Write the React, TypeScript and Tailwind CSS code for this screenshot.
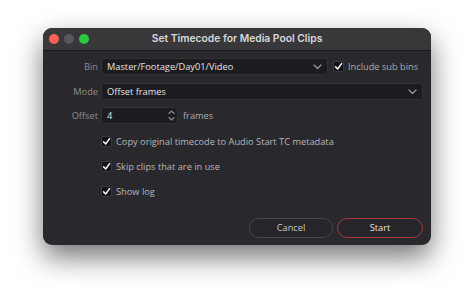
import React from "react";

const Check = () => (
  <div className="w-[11px] h-[11px] rounded-[2px] bg-[#141317] border border-[#3a393e] flex items-center justify-center shrink-0">
    <svg width="9" height="9" viewBox="0 0 10 10">
      <path d="M1.8 5.4 L4.1 7.8 L8.4 1.8" fill="none" stroke="#f2f2f2" strokeWidth="1.7" strokeLinecap="round" strokeLinejoin="round" />
    </svg>
  </div>
);

const Chevron = () => (
  <svg width="9" height="6" viewBox="0 0 9 6">
    <path d="M1 1 L4.5 4.5 L8 1" fill="none" stroke="#9a999e" strokeWidth="1.2" strokeLinecap="round" strokeLinejoin="round" />
  </svg>
);

export default function App() {
  const font = { fontFamily: '"Open Sans", "Liberation Sans", sans-serif' };
  return (
    <div className="w-[474px] h-[302px] bg-white pl-[43px] pt-[28px]" style={font}>
      <div className="w-[388px] h-[217px] rounded-[9px] bg-[#29282d] shadow-[0_12px_28px_rgba(0,0,0,0.55)] flex flex-col overflow-hidden">
        <div className="h-[23px] bg-[#38373a] border-b border-[#19181c] flex items-center relative shrink-0">
          <div className="flex items-center gap-[5px] pl-[6px]">
            <div className="w-[10px] h-[10px] rounded-full bg-[#fe5f57]" />
            <div className="w-[10px] h-[10px] rounded-full bg-[#58575b]" />
            <div className="w-[10px] h-[10px] rounded-full bg-[#2ac840]" />
          </div>
          <div className="absolute inset-0 flex items-center justify-center text-[10.3px] font-semibold text-[#d8d8d8]" style={{ fontFamily: 'Inter, "Liberation Sans", sans-serif' }}>
            Set Timecode for Media Pool Clips
          </div>
        </div>
        <div className="flex flex-col pt-[7px] text-[9.25px]">
          <div className="flex items-center h-[17px]">
            <div className="w-[55px] text-right text-[#8e8d92]">Bin</div>
            <div className="ml-[3px] w-[227px] h-[17px] rounded-[3px] bg-[#1c1b1f] border border-[#323136] flex items-center justify-between pl-[5px] pr-[5px] text-[#e4e4e4]">
              <span>Master/Footage/Day01/Video</span>
              <Chevron />
            </div>
            <div className="ml-[5px] flex items-center gap-[4px] text-[#a9a8ad] whitespace-nowrap">
              <Check />
              <span>Include sub bins</span>
            </div>
          </div>
          <div className="flex items-center h-[17px] mt-[8px]">
            <div className="w-[55px] text-right text-[#8e8d92]">Mode</div>
            <div className="ml-[3px] w-[322px] h-[17px] rounded-[3px] bg-[#1c1b1f] border border-[#323136] flex items-center justify-between pl-[5px] pr-[5px] text-[#e4e4e4]">
              <span>Offset frames</span>
              <Chevron />
            </div>
          </div>
          <div className="flex items-center h-[17px] mt-[7px]">
            <div className="w-[55px] text-right text-[#8e8d92]">Offset</div>
            <div className="ml-[3px] w-[77px] h-[17px] rounded-[3px] bg-[#1c1b1f] border border-[#323136] flex items-center justify-between pl-[5px] pr-[2px] text-[#e4e4e4]">
              <span>4</span>
              <svg width="7" height="13" viewBox="0 0 7 13">
                <path d="M1 4.5 L3.5 2 L6 4.5" fill="none" stroke="#8e8d92" strokeWidth="1.1" strokeLinecap="round" strokeLinejoin="round" />
                <path d="M1 8.5 L3.5 11 L6 8.5" fill="none" stroke="#8e8d92" strokeWidth="1.1" strokeLinecap="round" strokeLinejoin="round" />
              </svg>
            </div>
            <span className="ml-[5px] text-[#a9a8ad]">frames</span>
          </div>
          <div className="flex flex-col mt-[5px] pl-[58px] text-[#b6b5ba]">
            <div className="h-[25px] flex items-center gap-[4px]">
              <Check />
              <span>Copy original timecode to Audio Start TC metadata</span>
            </div>
            <div className="h-[25px] flex items-center gap-[4px]">
              <Check />
              <span>Skip clips that are in use</span>
            </div>
            <div className="h-[25px] flex items-center gap-[4px]">
              <Check />
              <span>Show log</span>
            </div>
          </div>
          <div className="flex justify-end gap-[4px] mt-[14px] pr-[8px]">
            <button className="w-[84px] h-[20px] rounded-[10px] border border-[#47464b] bg-[#262529] text-[#c9c8cd] text-[9.25px] flex items-center justify-center">
              Cancel
            </button>
            <button className="w-[86px] h-[20px] rounded-[10px] border border-[#a8383c] bg-[#262529] text-[#e4e4e4] text-[9.25px] flex items-center justify-center">
              Start
            </button>
          </div>
        </div>
      </div>
    </div>
  );
}
